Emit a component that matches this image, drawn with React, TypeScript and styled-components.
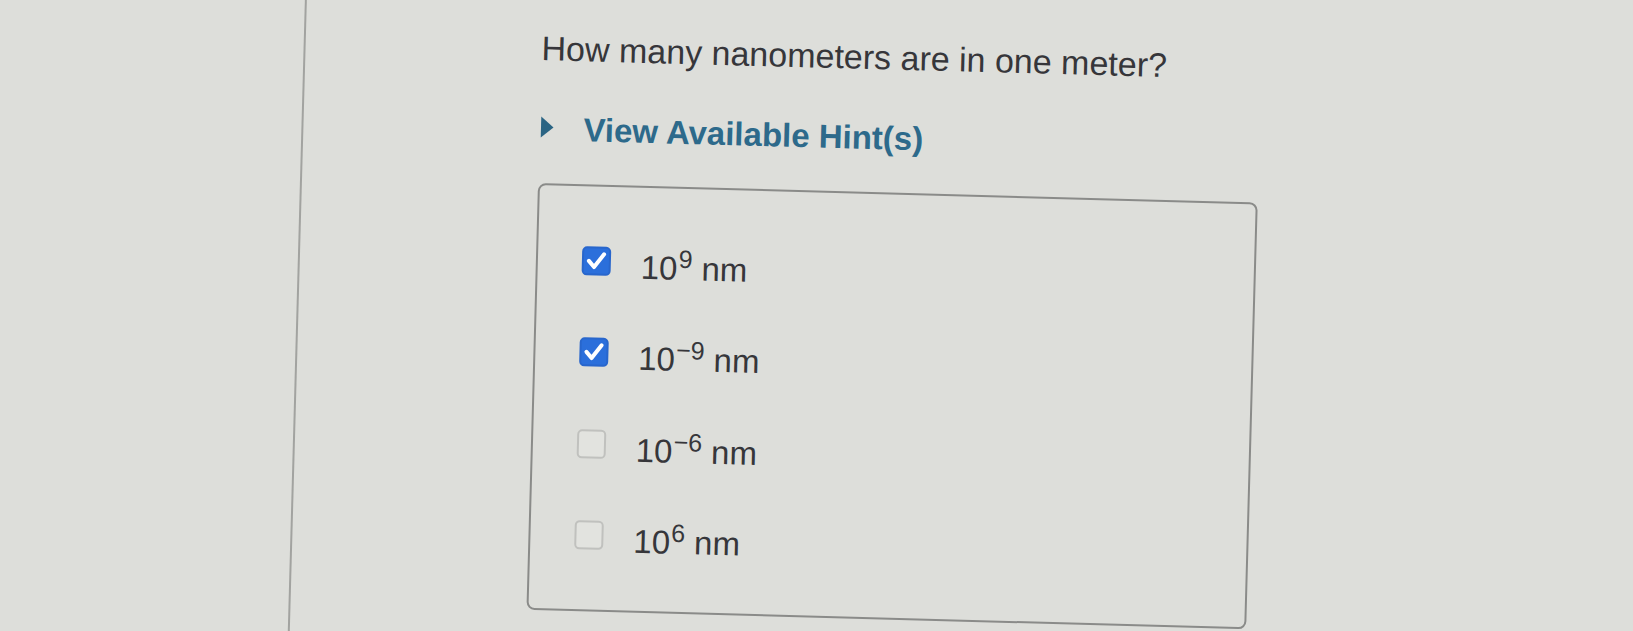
import React from 'react';
import styled, { createGlobalStyle } from 'styled-components';

const options = [
  { id: 1, exp: '9', checked: true },
  { id: 2, exp: '\u22129', checked: true },
  { id: 3, exp: '\u22126', checked: false },
  { id: 4, exp: '6', checked: false },
];

const App = () => {
  return (
    <Frame>
      <GlobalStyle />
      <Scene>
        <SidePane />
        <Main>
          <Question>How many nanometers are in one meter?</Question>
          <HintToggle type="button">
            <Caret viewBox="0 0 15 24">
              <path d="M1.5 1.5 L14 12 L1.5 22.5 Z" />
            </Caret>
            View Available Hint(s)
          </HintToggle>
          <AnswerBox>
            {options.map(({ id, exp, checked }) => (
              <Option key={id}>
                <Box checked={checked}>
                  {checked && (
                    <svg viewBox="0 0 29 29" width="29" height="29">
                      <path d="M7 14.5 L12.3 20.5 L22 7.5" />
                    </svg>
                  )}
                </Box>
                <Label>
                  10<Sup>{exp}</Sup> nm
                </Label>
              </Option>
            ))}
          </AnswerBox>
        </Main>
      </Scene>
    </Frame>
  );
};

export default App;

const GlobalStyle = createGlobalStyle`
  html, body {
    margin: 0;
    padding: 0;
    height: 100%;
    overflow: hidden;
    background: #dddeda;
  }
  body {
    font-family: "Liberation Sans", Arial, sans-serif;
  }
`;

const Frame = styled.div`
  width: 100vw;
  height: 100vh;
  overflow: hidden;
`;

// the photo is tilted a little clockwise
const Scene = styled.div`
  display: flex;
  width: 1633px;
  height: 640px;
  transform: rotate(1.55deg);
  transform-origin: 538px 183px;
`;

const SidePane = styled.aside`
  flex: 0 0 300px;
  border-right: 2px solid #a2a3a0;
`;

const Main = styled.main`
  flex: 1;
  display: flex;
  flex-direction: column;
  align-items: flex-start;
  padding: 28px 0 0 236px;
`;

const Question = styled.h1`
  margin: 0;
  font-size: 34px;
  line-height: 40px;
  font-weight: 400;
  color: #36363a;
`;

const HintToggle = styled.button`
  display: flex;
  align-items: flex-start;
  gap: 29px;
  margin-top: 41px;
  padding: 0;
  border: 0;
  background: none;
  font-family: inherit;
  font-size: 33px;
  font-weight: 700;
  line-height: 40px;
  color: #2d6a8b;
  cursor: pointer;
`;

const Caret = styled.svg`
  flex: none;
  width: 15px;
  height: 24px;
  margin-top: 6px;
  fill: #2a6483;
`;

const AnswerBox = styled.div`
  box-sizing: border-box;
  width: 720px;
  height: 427px;
  margin-top: 34px;
  padding: 60px 0 0 44px;
  border: 2px solid #8a8b89;
  border-radius: 8px;
  display: flex;
  flex-direction: column;
  gap: 51.3px;
`;

const Option = styled.label`
  display: flex;
  align-items: flex-start;
  gap: 30px;
  height: 40px;
`;

const Box = styled.span<{ checked: boolean }>`
  flex: none;
  box-sizing: border-box;
  width: 29px;
  height: 29px;
  border-radius: 5px;
  background: ${(p) => (p.checked ? '#2b6fdb' : '#e2e3df')};
  border: 2px solid ${(p) => (p.checked ? '#2866cc' : '#c0c1be')};
  display: flex;
  align-items: center;
  justify-content: center;

  & svg {
    flex: none;
    margin: -2px;
    fill: none;
    stroke: #ffffff;
    stroke-width: 4;
    stroke-linecap: round;
    stroke-linejoin: round;
  }
`;

const Label = styled.span`
  font-size: 33px;
  line-height: 40px;
  color: #36363a;
  white-space: nowrap;
`;

const Sup = styled.sup`
  position: relative;
  top: -12px;
  font-size: 25px;
  line-height: 0;
  vertical-align: baseline;
  margin-left: 1px;
`;
